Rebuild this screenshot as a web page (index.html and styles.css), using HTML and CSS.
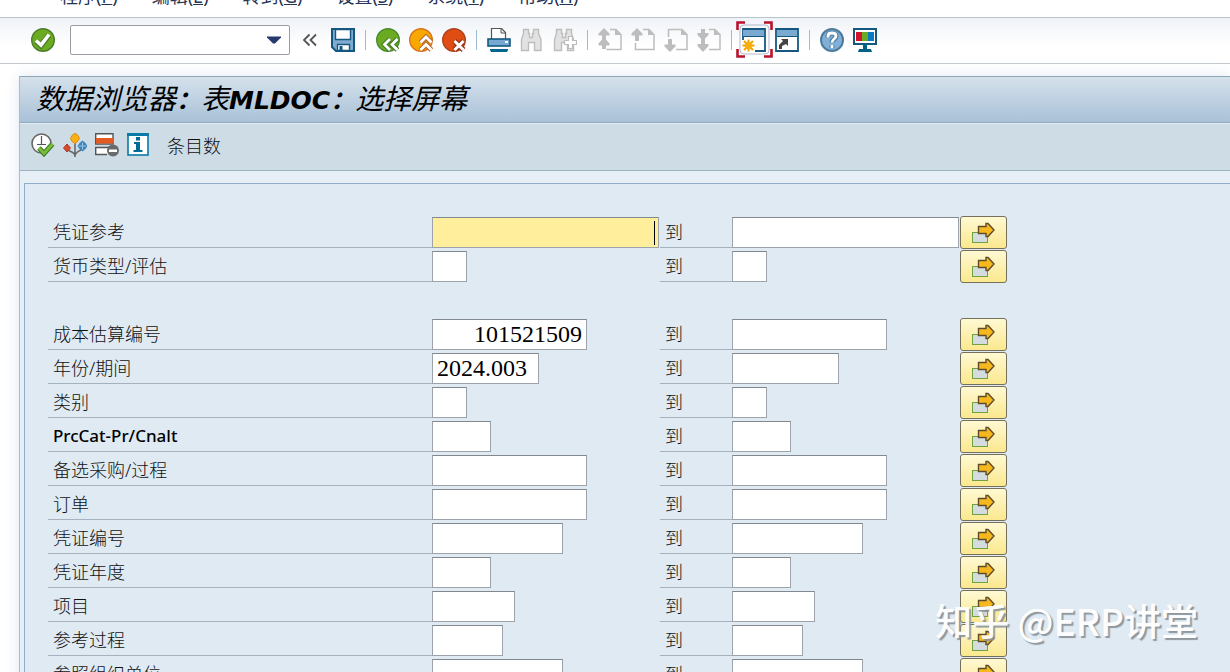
FILE: index.html
```html
<!DOCTYPE html>
<html lang="zh-CN">
<head>
    <meta charset="UTF-8">
    <meta name="viewport" content="width=device-width, initial-scale=1.0">
    <title>数据浏览器：表MLDOC：选择屏幕</title>
    <link rel="stylesheet" href="styles.css">
</head>
<body>
    <!-- Arrow icon shared by all the multiple selection buttons -->
    <svg class="sprite" width="0" height="0">
        <symbol id="icon-multi" viewBox="0 0 24 24">
            <rect x="0.500" y="11.500" width="15" height="10" fill="#d5dce0" stroke="#6fa33c"/>
            <path d="M6.500 5.500H14v-3h2L22 9l-6 6.500h-2v-3H6.500z" fill="#f6b81c" stroke="#5e4b2c" stroke-width="1.400"/>
        </symbol>
    </svg>

    <nav class="menu-bar">
        <a href="#">程序(<u>P</u>)</a>
        <a href="#">编辑(<u>E</u>)</a>
        <a href="#">转到(<u>G</u>)</a>
        <a href="#">设置(<u>S</u>)</a>
        <a href="#">系统(<u>Y</u>)</a>
        <a href="#">帮助(<u>H</u>)</a>
    </nav>

    <div class="toolbar">
        <button class="icon-btn" aria-label="Enter">
            <svg viewBox="0 0 24 24"><circle cx="12" cy="12" r="11.300" fill="#6aab22" stroke="#4b7d2b" stroke-width="1.400"/><path d="M5 13l5 4.500L18 7" fill="none" stroke="#477a23" stroke-width="5.500"/><path d="M5 12.500l5 4.500L18 6.500" fill="none" stroke="#fff" stroke-width="3.600"/></svg>
        </button>
        <div class="command">
            <input type="text" aria-label="Command">
            <button aria-label="History"><svg viewBox="0 0 14 8"><path d="M0 0.500h14v1L8 7.500H6L0 1.500z" fill="#263a6d"/></svg></button>
        </div>
        <button class="icon-btn collapse" aria-label="Collapse">
            <svg viewBox="0 0 24 24"><path d="M10.500 6.500L5 12l5.500 5.500M17 6.500L11.500 12l5.500 5.500" fill="none" stroke="#555" stroke-width="1.800"/></svg>
        </button>
        <button class="icon-btn" aria-label="Save">
            <svg viewBox="0 0 24 24"><path d="M1 1h22v22H5l-4-4z" fill="#7fabd0" stroke="#15587f" stroke-width="2"/><path d="M4.500 1.500h15v10h-15z" fill="#fff" stroke="#15587f" stroke-width="1.400"/><path d="M6.500 16.500h12v6h-12z" fill="#fff" stroke="#15587f" stroke-width="1.400"/><path d="M8.500 18h3v4h-3z" fill="#15587f"/></svg>
        </button>
        <span class="sep"></span>
        <button class="icon-btn" aria-label="Back">
            <svg viewBox="0 0 24 24"><circle cx="12" cy="12" r="11.300" fill="#6aab22" stroke="#4b8a31" stroke-width="1.400"/><path d="M14 11l-5.500 5.500L14 22M21.500 11L16 16.500l5.500 5.500" fill="none" stroke="#477a23" stroke-width="5"/><path d="M14 11l-5.500 5.500L14 22M21.500 11L16 16.500l5.500 5.500" fill="none" stroke="#fff" stroke-width="2.800"/></svg>
        </button>
        <button class="icon-btn" aria-label="Exit">
            <svg viewBox="0 0 24 24"><circle cx="12" cy="12" r="11.300" fill="#f9a800" stroke="#d9731c" stroke-width="1.400"/><path d="M11.500 14.500L17 9l5.500 5.500M11.500 22L17 16.500l5.500 5.500" fill="none" stroke="#ba672a" stroke-width="5"/><path d="M11.500 14.500L17 9l5.500 5.500M11.500 22L17 16.500l5.500 5.500" fill="none" stroke="#fff" stroke-width="2.800"/></svg>
        </button>
        <button class="icon-btn" aria-label="Cancel">
            <svg viewBox="0 0 24 24"><circle cx="12" cy="12" r="11.300" fill="#df4d13" stroke="#ad431d" stroke-width="1.400"/><path d="M12.500 13l9 9M21.500 13l-9 9" fill="none" stroke="#9b3517" stroke-width="5.500"/><path d="M12.500 13l9 9M21.500 13l-9 9" fill="none" stroke="#fff" stroke-width="3"/></svg>
        </button>
        <span class="sep"></span>
        <button class="icon-btn" aria-label="Print">
            <svg viewBox="0 0 24 24"><path d="M4.500 11V.5h10l4 4V11" fill="#fff" stroke="#555" stroke-width="1.200"/><path d="M14 .5v4.500h4.500" fill="none" stroke="#555"/><rect x="1" y="11" width="22" height="7" fill="#76a8d2" stroke="#15587f" stroke-width="1.600"/><rect x="18" y="13" width="3" height="2" fill="#fff"/><path d="M3 21h18v1l-1 2H4l-1-2z" fill="#006590"/></svg>
        </button>
        <button class="icon-btn" aria-label="Find" disabled>
            <svg viewBox="0 0 24 24"><path d="M3.500 1.500h5v4h1v4h3v-4h1v-4h5v4l2.500 6v11h-6.500v-8h-6v8h-7v-11l2-6z" fill="#e2e2e2" stroke="#bdbdbd" stroke-width="1.400"/></svg>
        </button>
        <button class="icon-btn" aria-label="Find next" disabled>
            <svg viewBox="0 0 24 24"><path d="M3.500 1.500h5v4h1v4h3v-4h1v-4h5v4l2 6v11h-6v-8h-6v8h-7v-11l2-6z" fill="#e2e2e2" stroke="#bdbdbd" stroke-width="1.400"/><path d="M15.500 8.500h4v4h4v4h-4v4h-4v-4h-4v-4h4z" fill="#fff" stroke="#bdbdbd" stroke-width="1.200"/></svg>
        </button>
        <span class="sep"></span>
        <button class="icon-btn" aria-label="First page" disabled>
            <svg viewBox="0 0 24 24"><path d="M12 1.500h6l5 5v15H8.500" fill="none" stroke="#bdbdbd" stroke-width="1.500"/><path d="M17 1v6h6z" fill="#bdbdbd"/><path d="M6 0l5.500 5.500v2H8v4l3.500 4v2H8V21H4v-3.500H.5v-2l3.500-4v-4H.5v-2z" fill="#bdbdbd"/></svg>
        </button>
        <button class="icon-btn" aria-label="Previous page" disabled>
            <svg viewBox="0 0 24 24"><path d="M12 1.500h6l5 5v15H4.500V15" fill="none" stroke="#bdbdbd" stroke-width="1.500"/><path d="M17 1v6h6z" fill="#bdbdbd"/><path d="M6 0l5.500 5.500v2H8V13H4V7.500H.5v-2z" fill="#bdbdbd"/></svg>
        </button>
        <button class="icon-btn" aria-label="Next page" disabled>
            <svg viewBox="0 0 24 24"><path d="M4.500 9V1.500H18l5 5v15H12" fill="none" stroke="#bdbdbd" stroke-width="1.500"/><path d="M17 1v6h6z" fill="#bdbdbd"/><path d="M4 11h4v5.500h3.500v2L6 24 .5 18.500v-2H4z" fill="#bdbdbd"/></svg>
        </button>
        <button class="icon-btn" aria-label="Last page" disabled>
            <svg viewBox="0 0 24 24"><path d="M12 1.500h6l5 5v15H12" fill="none" stroke="#bdbdbd" stroke-width="1.500"/><path d="M17 1v6h6z" fill="#bdbdbd"/><path d="M4 1h4v4h3.500v2L8 10.500V16h3.500v2L6 24 .5 18v-2H4v-5.500L.5 7V5H4z" fill="#bdbdbd"/></svg>
        </button>
        <span class="sep"></span>
        <button class="icon-btn marked" aria-label="New session">
            <svg viewBox="0 0 24 24"><path d="M1 12V1h22v22H13" fill="#fff" stroke="#15587f" stroke-width="1.800"/><path d="M1 2h21v6H1z" fill="#7aa9d1"/><path d="M1 8.500h21" stroke="#15587f"/><path d="M6.500 11.500v12M.5 17.500h12M2 13l9 9M11 13l-9 9" stroke="#f5a400" stroke-width="2"/><circle cx="6.500" cy="17.500" r="3.800" fill="#f9ae10"/></svg>
            <svg class="frame" viewBox="0 0 37 37"><rect x="4" y="4" width="29" height="29" rx="4" fill="none" stroke="#b5b8cc"/><path d="M1.500 9V1.500H9M28 1.500h7.500V9M35.500 28v7.500H28M9 35.500H1.500V28" fill="none" stroke="#b8122c" stroke-width="2.600"/></svg>
        </button>
        <button class="icon-btn" aria-label="Create shortcut">
            <svg viewBox="0 0 24 24"><path d="M1 1h22v22H1z" fill="#fff" stroke="#15587f" stroke-width="1.800"/><path d="M2 2h20v6H2z" fill="#7aa9d1"/><path d="M2 8.500h20" stroke="#15587f"/><path d="M4 21v-4l4-4-2-2h7v7l-2-2-4 2v3z" fill="#444"/></svg>
        </button>
        <span class="sep"></span>
        <button class="icon-btn" aria-label="Help">
            <svg viewBox="0 0 24 24"><circle cx="12" cy="12" r="11" fill="#80afd8" stroke="#4c7b9d" stroke-width="2"/><path d="M8 9.500V8c0-4 8-4 8 0 0 3-4 3-4 6.500M12 17v3" fill="none" stroke="#4c7b9d" stroke-width="5"/><path d="M8 9.500V8c0-4 8-4 8 0 0 3-4 3-4 6.500M12 17v3" fill="none" stroke="#fff" stroke-width="2.800"/></svg>
        </button>
        <button class="icon-btn" aria-label="Customize layout">
            <svg viewBox="0 0 24 24"><rect x="1" y="1" width="22" height="15" fill="#fff" stroke="#15587f" stroke-width="2"/><path d="M3 4h6v9H3z" fill="#d3132c"/><path d="M9 4h6v9H9z" fill="#6aac25"/><path d="M15 4h6v9h-6z" fill="#0b7bc0"/><path d="M10 16h4v5h4l1 3H5l1-3h4z" fill="#006086"/></svg>
        </button>
    </div>

    <main class="window">
        <h1>数据浏览器<b>：</b>表<b>MLDOC：</b>选择屏幕</h1>

        <div class="app-bar">
            <button class="icon-btn" aria-label="Execute">
                <svg viewBox="0 0 24 24"><circle cx="10.500" cy="10.500" r="9.500" fill="#fff" stroke="#666" stroke-width="1.600"/><path d="M10.500 3v9M6 11.500h9" stroke="#555" stroke-width="1.200"/><path d="M8 15l5 5.500L21.500 11" fill="none" stroke="#3f7d26" stroke-width="5"/><path d="M8 15l5 5.500L21.500 11" fill="none" stroke="#78bd3c" stroke-width="2.800"/></svg>
            </button>
            <button class="icon-btn" aria-label="Get variant">
                <svg viewBox="0 0 24 24"><path d="M12 9v15M4 15c0 4 8 3 8 8M20 14c0 4-8 4-8 9" fill="none" stroke="#666" stroke-width="1.500"/><path d="M12 0l3 2.500 1.500 3L14 9l-2 1.500L9 8.500l-1.500-3L9 2.500z" fill="#fbb011" stroke="#d98d17"/><path d="M4 11l3.500 4L4 19 .5 15z" fill="#dc492b" stroke="#a83a29"/><path d="M19.500 7.500l3 2.500 2 3-2 3-3 2.500-3-2.500-2-3 2-3z" fill="#3d86bd"/><path d="M19.500 9.500v7M16 13h7" stroke="#99c3df"/></svg>
            </button>
            <button class="icon-btn" aria-label="Delete row">
                <svg viewBox="0 0 24 24"><path d="M.7.7h17.300v10.300H.7zM18 14.500H.7v7H12" fill="#fff" stroke="#555" stroke-width="1.400"/><path d="M1 5h17v5.500H1z" fill="#e15b22"/><circle cx="18" cy="17.500" r="6" fill="#6a6a6a"/><path d="M14 16.500h8v2.500h-8z" fill="#fff"/></svg>
            </button>
            <button class="icon-btn" aria-label="Information">
                <svg viewBox="0 0 24 24"><rect x="1" y="1" width="20" height="21" fill="#fff" stroke="#087ba6" stroke-width="1.600"/><path d="M0 0h22v3H0z" fill="#087ba6"/><path d="M9 4h4v3.500H9zM7 9h6v8h2.500v2h-9v-2H9v-6H7z" fill="#006b97"/></svg>
            </button>
            <button class="text-btn">条目数</button>
        </div>

        <form class="selection">
            <div class="row">
                <label for="ref-low">凭证参考</label>
                <input class="len-18 active" id="ref-low" type="text">
                <label for="ref-high">到</label>
                <input class="len-18" id="ref-high" type="text">
                <button type="button" aria-label="多项选择"><svg><use href="#icon-multi"/></svg></button>
            </div>
            <div class="row last-of-block">
                <label for="curtp-low">货币类型/评估</label>
                <input class="len-2" id="curtp-low" type="text">
                <label for="curtp-high">到</label>
                <input class="len-2" id="curtp-high" type="text">
                <button type="button" aria-label="多项选择"><svg><use href="#icon-multi"/></svg></button>
            </div>

            <div class="row">
                <label for="kalnr-low">成本估算编号</label>
                <input class="len-12 number" id="kalnr-low" type="text" value="101521509">
                <label for="kalnr-high">到</label>
                <input class="len-12 number" id="kalnr-high" type="text">
                <button type="button" aria-label="多项选择"><svg><use href="#icon-multi"/></svg></button>
            </div>
            <div class="row">
                <label for="period-low">年份/期间</label>
                <input class="len-8" id="period-low" type="text" value="2024.003">
                <label for="period-high">到</label>
                <input class="len-8" id="period-high" type="text">
                <button type="button" aria-label="多项选择"><svg><use href="#icon-multi"/></svg></button>
            </div>
            <div class="row">
                <label for="categ-low">类别</label>
                <input class="len-2" id="categ-low" type="text">
                <label for="categ-high">到</label>
                <input class="len-2" id="categ-high" type="text">
                <button type="button" aria-label="多项选择"><svg><use href="#icon-multi"/></svg></button>
            </div>
            <div class="row">
                <label class="latin" for="ptyp-low">PrcCat-Pr/Cnalt</label>
                <input class="len-4" id="ptyp-low" type="text">
                <label for="ptyp-high">到</label>
                <input class="len-4" id="ptyp-high" type="text">
                <button type="button" aria-label="多项选择"><svg><use href="#icon-multi"/></svg></button>
            </div>
            <div class="row">
                <label for="bvalt-low">备选采购/过程</label>
                <input class="len-12" id="bvalt-low" type="text">
                <label for="bvalt-high">到</label>
                <input class="len-12" id="bvalt-high" type="text">
                <button type="button" aria-label="多项选择"><svg><use href="#icon-multi"/></svg></button>
            </div>
            <div class="row">
                <label for="order-low">订单</label>
                <input class="len-12" id="order-low" type="text">
                <label for="order-high">到</label>
                <input class="len-12" id="order-high" type="text">
                <button type="button" aria-label="多项选择"><svg><use href="#icon-multi"/></svg></button>
            </div>
            <div class="row">
                <label for="belnr-low">凭证编号</label>
                <input class="len-10" id="belnr-low" type="text">
                <label for="belnr-high">到</label>
                <input class="len-10" id="belnr-high" type="text">
                <button type="button" aria-label="多项选择"><svg><use href="#icon-multi"/></svg></button>
            </div>
            <div class="row">
                <label for="gjahr-low">凭证年度</label>
                <input class="len-4" id="gjahr-low" type="text">
                <label for="gjahr-high">到</label>
                <input class="len-4" id="gjahr-high" type="text">
                <button type="button" aria-label="多项选择"><svg><use href="#icon-multi"/></svg></button>
            </div>
            <div class="row">
                <label for="item-low">项目</label>
                <input class="len-6" id="item-low" type="text">
                <label for="item-high">到</label>
                <input class="len-6" id="item-high" type="text">
                <button type="button" aria-label="多项选择"><svg><use href="#icon-multi"/></svg></button>
            </div>
            <div class="row">
                <label for="awtyp-low">参考过程</label>
                <input class="len-5" id="awtyp-low" type="text">
                <label for="awtyp-high">到</label>
                <input class="len-5" id="awtyp-high" type="text">
                <button type="button" aria-label="多项选择"><svg><use href="#icon-multi"/></svg></button>
            </div>
            <div class="row">
                <label for="aworg-low">参照组织单位</label>
                <input class="len-10" id="aworg-low" type="text">
                <label for="aworg-high">到</label>
                <input class="len-10" id="aworg-high" type="text">
                <button type="button" aria-label="多项选择"><svg><use href="#icon-multi"/></svg></button>
            </div>
        </form>
    </main>

    <div class="watermark">知乎 @ERP讲堂</div>
</body>
</html>
```
FILE: styles.css
```css
* {
    box-sizing: border-box;
}
body {
    position: relative;
    display: flex;
    flex-direction: column;
    height: 100vh;
    margin: 0;
    overflow: hidden;
    background: #fff;
    color: #111;
    font-family: "Noto Sans", "Noto Sans CJK SC", sans-serif;
    font-size: 18px;
    font-weight: 300;
}
.sprite {
    position: absolute;
}
button {
    padding: 0;
    border: none;
    background: none;
    color: inherit;
    font: inherit;
    cursor: pointer;
}
svg {
    display: block;
}

/* Menu */
.menu-bar {
    display: flex;
    flex: none;
    align-items: flex-end;
    gap: 34px;
    height: 18px;
    padding: 0 60px 8px;
    border-bottom: 1px solid #b9c5cd;
}
.menu-bar a {
    color: #253354;
    font-weight: 400;
    line-height: 26px;
    text-decoration: none;
    white-space: nowrap;
}

/* Standard toolbar */
.toolbar {
    display: flex;
    flex: none;
    align-items: center;
    gap: 9px;
    height: 46px;
    padding-bottom: 1px;
    padding-left: 31px;
    border-bottom: 1px solid #c3c9ce;
    background: linear-gradient(#eff2f7, #fff 60%);
}
.icon-btn {
    position: relative;
    flex: none;
    width: 24px;
    height: 24px;
}
.icon-btn svg {
    width: 24px;
    height: 24px;
}
.collapse {
    width: 23px;
}
.icon-btn .frame {
    position: absolute;
    top: -7px;
    left: -6px;
    width: 37px;
    height: 37px;
}
.command {
    display: flex;
    width: 220px;
    height: 30px;
    margin-left: 6px;
    border: 1px solid #999da3;
    border-radius: 2px;
    background: #fff;
}
.command input {
    flex: 1;
    min-width: 0;
    padding: 0 4px;
    border: none;
    background: none;
    font: inherit;
}
.command button {
    width: 30px;
}
.command svg {
    width: 14px;
    height: 8px;
    margin: 0 auto;
}
.sep {
    width: 3px;
    height: 20px;
    background: linear-gradient(#9fbccb, #9fbccb) center / 1px 100% no-repeat;
}

/* Window */
.window {
    flex: 1;
    margin-top: 12px;
    margin-left: 19px;
    border-top: 1px solid #8fa5b8;
    border-left: 1px solid #a9bccb;
    background: #e6eff6;
    box-shadow: 0 0 14px #dfe6f0;
}
h1 {
    height: 46px;
    margin: 0;
    padding-left: 16px;
    border-bottom: 1px solid #91a9bf;
    background: linear-gradient(#d5e1eb, #a9c1d8);
    color: #000;
    font-size: 28px;
    font-style: italic;
    font-weight: 400;
    line-height: 43px;
    white-space: nowrap;
}
h1 b {
    font-family: "DejaVu Sans", "Noto Sans CJK SC", sans-serif;
    font-size: 25px;
}
.app-bar {
    display: flex;
    align-items: center;
    gap: 8px;
    height: 48px;
    padding-bottom: 4px;
    padding-left: 11px;
    border-top: 1px solid #e3edf4;
    border-bottom: 1px solid #9fb2c3;
    background: #cedce6;
}
.text-btn {
    margin-left: 8px;
}

/* Selection criteria */
.selection {
    margin-top: 12px;
    margin-left: 4px;
    padding: 32px 0 0 23px;
    border-top: 1px solid #92aec9;
    border-left: 1px solid #92aec9;
    background: #dfeaf3;
}
.row {
    display: grid;
    grid-template-columns: 384px 228px 72px 228px 47px;
    align-items: start;
    height: 34px;
}
.last-of-block {
    margin-bottom: 34px;
}
.row label {
    height: 32px;
    padding-left: 5px;
    border-bottom: 1px solid #a5b2bd;
    line-height: 32px;
    white-space: nowrap;
}
.row .latin {
    color: #000;
    font-size: 17px;
    font-weight: 500;
}
.row input {
    height: 31px;
    margin-top: 1px;
    padding: 0 4px;
    border: 1px solid #9da3ab;
    border-top-color: #83888e;
    border-radius: 0;
    background: #fff;
    color: #000;
    font-family: "Liberation Serif", serif;
    font-size: 24px;
    outline: none;
}
.row .number {
    text-align: right;
}
/* Active field, with the cursor at its right end */
.row .active {
    background: linear-gradient(#000, #000) right 3px center / 1px 24px no-repeat #ffee9c;
}
.len-2 { width: 35px; }
.len-4 { width: 59px; }
.len-5 { width: 71px; }
.len-6 { width: 83px; }
.len-8 { width: 107px; }
.len-10 { width: 131px; }
.len-12 { width: 155px; }
.len-18 { width: 227px; }
.row button {
    width: 47px;
    height: 33px;
    border: 1px solid #75705c;
    border-radius: 3px;
    background: linear-gradient(#fff9d3, #fbe88e);
}
.row button svg {
    width: 24px;
    height: 24px;
    margin: 0 auto;
}

.watermark {
    position: absolute;
    right: 32px;
    bottom: 25px;
    color: #fff;
    font-family: "Noto Sans CJK SC", sans-serif;
    font-size: 37px;
    font-weight: 500;
    line-height: 54px;
    text-shadow: 2px 2px 1px #8b949b;
    opacity: 0.95;
    pointer-events: none;
}
```
